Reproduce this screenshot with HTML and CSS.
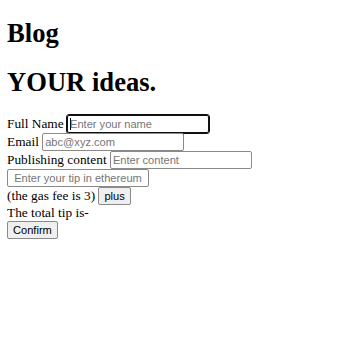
FILE: index.html
```html
<!DOCTYPE html>
<html>
<head>
<meta charset="utf-8">
<title>Blog</title>
<link rel="stylesheet" href="styles.css">
</head>
<body>
<h1>Blog</h1>
<h1>YOUR ideas.</h1>
<form class="post-form">
  <label>Full Name</label> <input class="field field-focused" type="text" placeholder="Enter your name"><br>
  <label>Email</label> <input class="field" type="text" placeholder="abc@xyz.com"><br>
  <label>Publishing content</label> <input class="field" type="text" placeholder="Enter content"><br>
  <input class="field field-tip" type="text" placeholder="Enter your tip in ethereum"><br>
  <span>(the gas fee is 3)</span> <button class="btn" type="button">plus</button><br>
  <span>The total tip is-</span><br>
  <button class="btn" type="button">Confirm</button>
</form>
</body>
</html>
```
FILE: styles.css
```css
html {
  background: #ffffff;
}
body {
  margin: 0 7px 7px;
  font-family: "Liberation Serif", "Times New Roman", serif;
  font-size: 13.33px;
  color: #000000;
}
h1 {
  font-size: 26.6px;
  font-weight: bold;
  margin: 17.8px 0;
}
.post-form {
  line-height: normal;
}
.field {
  box-sizing: border-box;
  font-family: "Liberation Sans", Arial, sans-serif;
  font-size: 11.1px;
  width: 142px;
  height: 18px;
  margin: 0;
  padding: 1px 2px;
  border: 1px solid #8a8a8a;
  border-radius: 2px;
  background: #ffffff;
  color: #000000;
}
.field::placeholder {
  color: #767676;
}
.field-focused {
  border: 1px solid #101010;
  outline: 1px solid #101010;
  background: linear-gradient(#000, #000) no-repeat 2px 2px / 1px 12px, #ffffff;
}
.field-tip {
  text-align: center;
}
.btn {
  box-sizing: border-box;
  font-family: "Liberation Sans", Arial, sans-serif;
  font-size: 11.1px;
  height: 18px;
  margin: 0;
  padding: 1px 5px;
  border: 1px solid #8a8a8a;
  border-radius: 2px;
  background: #efefef;
  color: #000000;
}
```
